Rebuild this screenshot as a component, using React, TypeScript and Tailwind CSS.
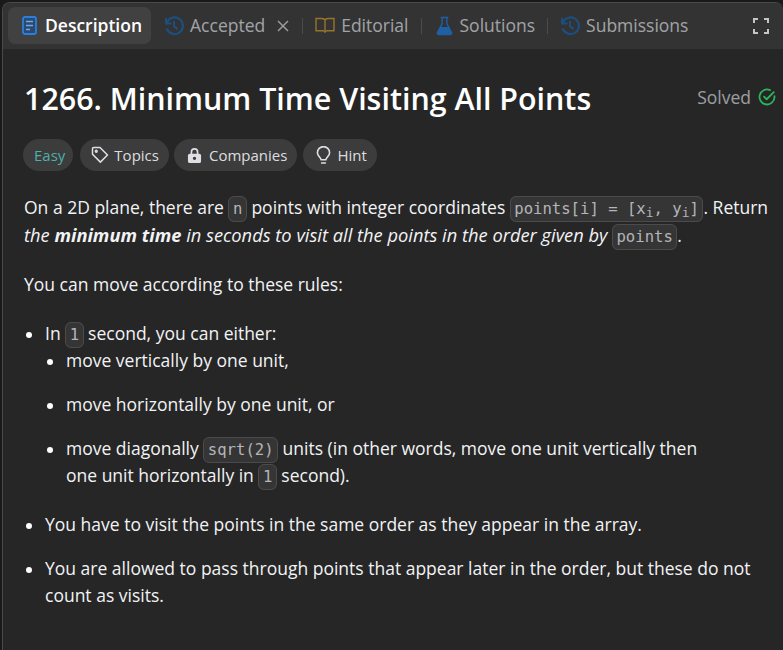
import React from 'react';

function Code({ children }: { children: React.ReactNode }) {
  return (
    <code className="font-['DejaVu_Sans_Mono',monospace] text-[15.6px] leading-[20px] px-[3.5px] py-[3px] rounded-[6px] border border-[#ffffff1c] bg-[#ffffff12] text-[#eff1f6b0]">
      {children}
    </code>
  );
}

function Divider() {
  return <div className="w-px h-[16px] bg-[#ffffff1f] mx-[12px]" />;
}

function HistoryIcon() {
  return (
    <svg width="20" height="20" viewBox="0 0 24 24" fill="none" stroke="#1c4f80" strokeWidth="2.6" strokeLinecap="round" strokeLinejoin="round">
      <path d="M2.500 3.500v5.500h5.500" />
      <path d="M3 9a10 10 0 1 1 .6 7" />
      <path d="M12 7v5.500l3.500 2.500" />
    </svg>
  );
}

function Pill({ children, className }: { children: React.ReactNode; className: string }) {
  return (
    <div className={`flex items-center h-[32px] rounded-full bg-[#3c3c3c] text-[15px] text-[#eff1f6e6] ${className}`}>
      {children}
    </div>
  );
}

function Item({ children, className = '' }: { children: React.ReactNode; className?: string }) {
  return (
    <li className={`before:inline-block before:w-[6px] before:h-[6px] before:rounded-full before:bg-white before:align-middle before:-ml-[19px] before:mr-[13px] ${className}`}>
      {children}
    </li>
  );
}

export default function App() {
  return (
    <div className="min-h-[650px] bg-[#1a1a1a] pt-[2px] pl-[2px] font-['Open_Sans',sans-serif] overflow-hidden">
      <div className="h-[648px] rounded-tl-[8px] rounded-tr-[8px] bg-[#262626] overflow-hidden border-t border-l border-[#4a4a4a]">
        <div className="flex items-center h-[46px] bg-[#333333] pl-[5px] pr-[12px] pb-[1px] text-[17.5px] text-[#eff1f699]">
          <div className="flex items-center gap-[8px] h-[37px] pl-[14px] pr-[9px] rounded-[7px] bg-[#414141] text-white font-semibold">
            <svg width="15" height="19" viewBox="0 0 15 19" fill="none">
              <rect x="1" y="1" width="13" height="17" rx="2" stroke="#2a7fe0" strokeWidth="1.8" fill="#2c4a6e" />
              <path d="M4 5.500h7M4 9.500h7M4 13.500h4" stroke="#6ea8e8" strokeWidth="1.5" />
            </svg>
            Description
          </div>
          <div className="flex items-center gap-[6px] pl-[13px]">
            <HistoryIcon />
            Accepted
            <svg className="ml-[5px]" width="14" height="14" viewBox="0 0 14 14" stroke="#9a9b9d" strokeWidth="1.5">
              <path d="M2 2l10 10M12 2L2 12" />
            </svg>
          </div>
          <Divider />
          <div className="flex items-center gap-[6px]">
            <svg width="20" height="17" viewBox="0 0 21 18" fill="none" stroke="#96752a" strokeWidth="1.500">
              <path d="M1 1.500h6c2 0 3.500 1 3.500 2.500 0-1.500 1.500-2.500 3.500-2.500h6v13h-7c-1.500 0-2.500 1-2.500 2 0-1-1-2-2.500-2H1z" />
              <path d="M10.500 4v12.500" />
            </svg>
            Editorial
          </div>
          <Divider />
          <div className="flex items-center gap-[7px] pl-[2px]">
            <svg width="17" height="20" viewBox="0 0 18 20">
              <path d="M5 1h8M6.500 1v6.500L1.500 17c-.5 1 .2 2 1.300 2h12.400c1.100 0 1.800-1 1.300-2l-5-9.500V1" fill="none" stroke="#1f5fa5" strokeWidth="1.500" />
              <path d="M4.500 11h9l3 6.500c.3.800-.2 1.500-1.300 1.500H2.800c-1.100 0-1.600-.7-1.300-1.500z" fill="#1f5fa5" />
            </svg>
            Solutions
          </div>
          <Divider />
          <div className="flex items-center gap-[6px]">
            <HistoryIcon />
            Submissions
          </div>
          <svg className="ml-auto mr-[1px]" width="18" height="18" viewBox="0 0 18 18" fill="none" stroke="#c4c5c7" strokeWidth="2">
            <path d="M2 6V2h4M12 2h4v4M16 12v4h-4M6 16H2v-4" />
          </svg>
        </div>

        <div className="pl-[21px] pr-[7px] text-[17.5px] leading-[27px] text-[#f2f3f5]">
          <div className="flex items-center justify-between pt-[28px]">
            <h1 className="text-[30.4px] leading-[44px] font-semibold text-white">1266. Minimum Time Visiting All Points</h1>
            <div className="flex items-center gap-[7px] text-[#eff1f699] -mt-[4px]">
              Solved
              <svg width="18" height="18" viewBox="0 0 24 24" fill="none" stroke="#2db55d" strokeWidth="2.400" strokeLinecap="round" strokeLinejoin="round">
                <path d="M22 11v1a10 10 0 1 1-6-9.200" />
                <path d="M8 11.500l3.500 3.500L21 5.500" />
              </svg>
            </div>
          </div>

          <div className="flex items-center mt-[18px] -ml-[1px]">
            <Pill className="pl-[11px] pr-[8px]"><span className="text-[#4db0aa]">Easy</span></Pill>
            <Pill className="ml-[7px] pl-[11px] pr-[10px] gap-[5px]">
              <svg width="18" height="18" viewBox="0 0 24 24" fill="none" stroke="currentColor" strokeWidth="2" strokeLinejoin="round">
                <path d="M2 3.500A1.500 1.500 0 0 1 3.500 2H12l10 10-9.500 9.500L2 11z" />
                <circle cx="7" cy="7" r="1.200" />
              </svg>
              Topics
            </Pill>
            <Pill className="ml-[5px] pl-[13px] pr-[10px] gap-[7px]">
              <svg width="15" height="15" viewBox="0 0 16 16" fill="currentColor">
                <path fillRule="evenodd" d="M8 0a4.200 4.200 0 0 0-4.200 4.200V6H3a2 2 0 0 0-2 2v6a2 2 0 0 0 2 2h10a2 2 0 0 0 2-2V8a2 2 0 0 0-2-2h-.8V4.200A4.200 4.200 0 0 0 8 0zm0 1.800a2.400 2.400 0 0 1 2.400 2.400V6H5.600V4.200A2.400 2.400 0 0 1 8 1.800zM8 9.200a1.800 1.800 0 1 1 0 3.600 1.800 1.800 0 0 1 0-3.600z" />
              </svg>
              Companies
            </Pill>
            <Pill className="ml-[6px] pl-[13px] pr-[10px] gap-[6px]">
              <svg width="15" height="19" viewBox="0 0 16 20" fill="none" stroke="currentColor" strokeWidth="1.700" strokeLinecap="round">
                <path d="M5.500 14.500C5 12 1.500 10.500 1.500 7a6.500 6.500 0 0 1 13 0c0 3.500-3.500 5-4 7.500z" />
                <path d="M6 18h4" />
              </svg>
              Hint
            </Pill>
          </div>

          <p className="mt-[23px]">
            On a 2D plane, there are <Code>n</Code> points with integer coordinates{' '}
            <Code>points[i] = [x<sub className="text-[13px]">i</sub>, y<sub className="text-[13px]">i</sub>]</Code>. Return<br />
            <em className="text-[18.3px]">the <strong>minimum time</strong> in seconds to visit all the points in the order given by</em> <Code>points</Code>.
          </p>

          <p className="mt-[22px]">You can move according to these rules:</p>

          <ul className="mt-[22px] pl-[21px]">
            <Item className="mb-[22px]">
              In <Code>1</Code> second, you can either:
              <ul className="pl-[21px]">
                <Item className="mb-[17px]">move vertically by one unit,</Item>
                <Item className="mb-[17px]">move horizontally by one unit, or</Item>
                <Item>
                  move diagonally <Code>sqrt(2)</Code> units (in other words, move one unit vertically then<br />
                  one unit horizontally in <Code>1</Code> second).
                </Item>
              </ul>
            </Item>
            <Item className="mb-[17px]">You have to visit the points in the same order as they appear in the array.</Item>
            <Item>
              You are allowed to pass through points that appear later in the order, but these do not<br />
              count as visits.
            </Item>
          </ul>
        </div>
      </div>
    </div>
  );
}
